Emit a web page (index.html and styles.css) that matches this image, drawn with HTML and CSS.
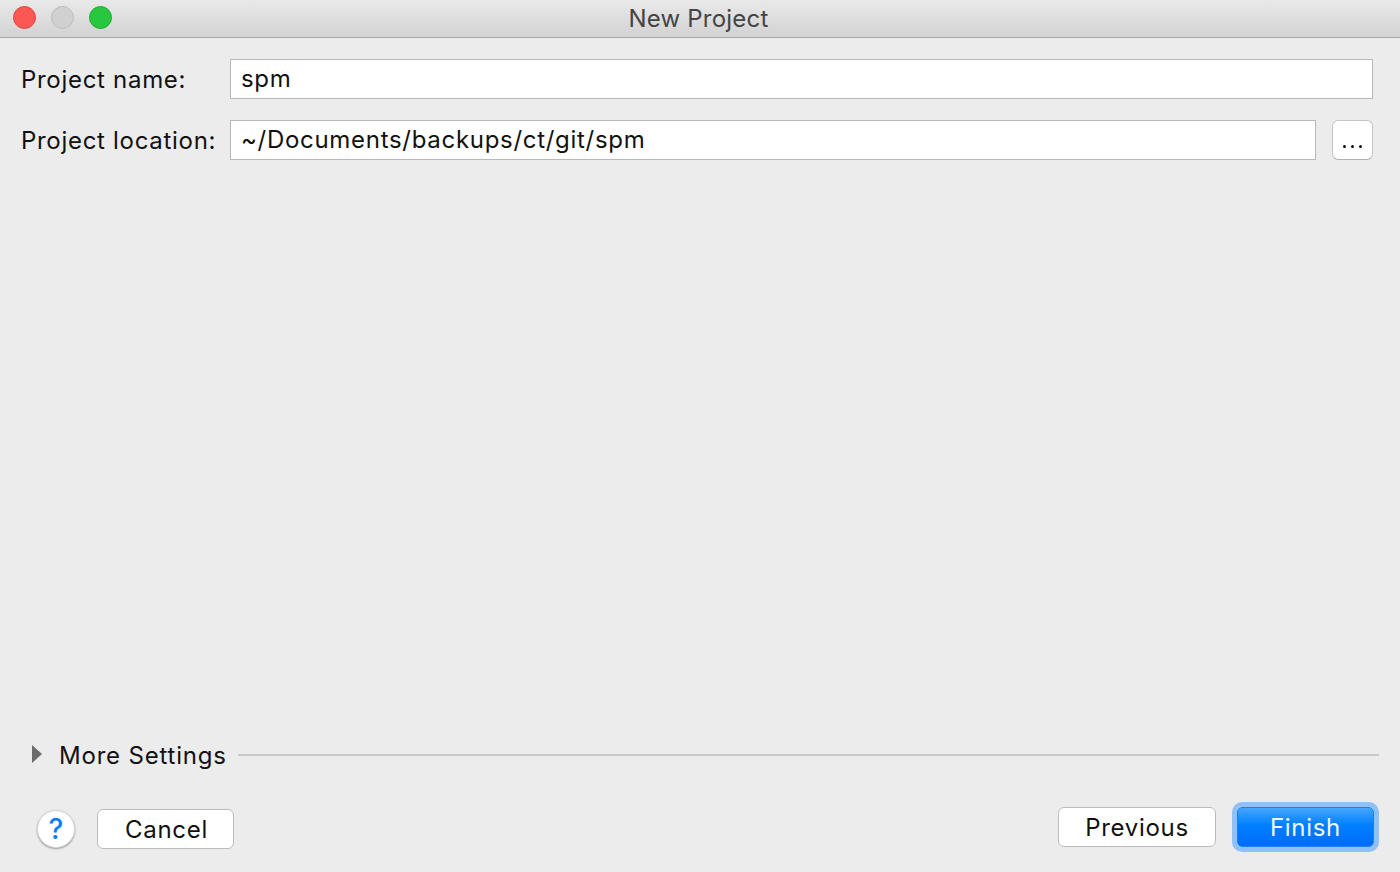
FILE: index.html
```html
<!DOCTYPE html>
<html lang="en">
<head>
    <meta charset="UTF-8">
    <title>New Project</title>
    <link rel="stylesheet" href="styles.css">
</head>
<body>
    <div class="window">
        <div class="titlebar">
            <div class="lights">
                <span class="light light-close"></span>
                <span class="light light-min"></span>
                <span class="light light-max"></span>
            </div>
            <div class="title">New Project</div>
        </div>
        <div class="form">
            <div class="row">
                <label class="label">Project name:</label>
                <div class="field">spm</div>
            </div>
            <div class="row">
                <label class="label">Project location:</label>
                <div class="field">~/Documents/backups/ct/git/spm</div>
                <button class="browse"><span class="dot"></span><span class="dot"></span><span class="dot"></span></button>
            </div>
        </div>
        <div class="more">
            <svg class="arrow" width="10" height="18" viewBox="0 0 10 18"><path d="M0 0 L10 9 L0 18 Z" fill="#6b6b6b"/></svg>
            <span class="more-label">More Settings</span>
            <div class="more-line"></div>
        </div>
        <div class="footer">
            <div class="footer-left">
                <button class="help">?</button>
                <button class="btn btn-cancel">Cancel</button>
            </div>
            <div class="footer-right">
                <button class="btn btn-prev">Previous</button>
                <button class="btn btn-finish">Finish</button>
            </div>
        </div>
    </div>
</body>
</html>
```
FILE: styles.css
```css
html, body {
    margin: 0;
    padding: 0;
    background: #ececec;
}
body {
    font-family: "Inter", "Liberation Sans", sans-serif;
    font-size: 24px;
    letter-spacing: 0.7px;
    color: #111111;
}
.window {
    height: 872px;
    display: flex;
    flex-direction: column;
    overflow: hidden;
}
.titlebar {
    height: 37px;
    border-bottom: 1px solid #a8a8a8;
    background: linear-gradient(#e9e9e9, #d2d2d2);
    display: flex;
    align-items: center;
    justify-content: center;
    position: relative;
}
.lights {
    position: absolute;
    top: 6px;
    left: 13px;
    display: flex;
    gap: 15px;
}
.light {
    width: 23px;
    height: 23px;
    box-sizing: border-box;
    border-radius: 50%;
    border: 1px solid #c8c8c8;
    background: #d2d2d2;
}
.light-close {
    background: #fc5753;
    border-color: #e0443e;
}
.light-min {
    background: #d0d0d0;
    border-color: #bdbdbd;
}
.light-max {
    background: #27c83f;
    border-color: #1dad2b;
}
.title {
    color: #444444;
    font-size: 24px;
    letter-spacing: 0.2px;
    margin-left: -3px;
}
.form {
    flex: 1;
    padding: 21px 27px 0 21px;
    display: flex;
    flex-direction: column;
    gap: 21px;
}
.row {
    display: flex;
    align-items: center;
}
.label {
    width: 209px;
    flex: none;
}
.field {
    flex: 1;
    height: 40px;
    box-sizing: border-box;
    background: #ffffff;
    border: 1px solid #b9b9b9;
    padding-left: 10px;
    line-height: 38px;
}
.browse {
    width: 41px;
    height: 40px;
    box-sizing: border-box;
    margin-left: 16px;
    padding: 0;
    background: #ffffff;
    border: 1px solid #c4c4c4;
    border-bottom-color: #b0b0b0;
    border-radius: 6px;
    display: flex;
    align-items: flex-end;
    justify-content: center;
    gap: 5px;
}
.dot {
    width: 3px;
    height: 3px;
    margin-bottom: 11px;
    border-radius: 50%;
    background: #111111;
}
.more {
    display: flex;
    align-items: center;
    padding: 0 21px 0 32px;
    height: 20px;
    margin-bottom: 37px;
}
.arrow {
    flex: none;
    margin-top: -2px;
}
.more-label {
    margin-left: 17px;
    letter-spacing: 0.8px;
    white-space: nowrap;
}
.more-line {
    flex: 1;
    height: 2px;
    margin-left: 11px;
    background: #c9c9c9;
}
.footer {
    display: flex;
    justify-content: space-between;
    align-items: flex-start;
    padding: 0 21px 20px 37px;
    height: 50px;
}
.footer-left {
    display: flex;
    align-items: center;
    gap: 22px;
    padding-top: 7px;
}
.footer-right {
    display: flex;
    align-items: center;
    gap: 16px;
}
button {
    font-family: inherit;
    font-size: 24px;
    letter-spacing: 0.7px;
    color: #111111;
}
.help {
    width: 38px;
    height: 38px;
    box-sizing: border-box;
    padding: 0;
    border: 1px solid #d4d4d4;
    border-radius: 50%;
    background: #ffffff;
    box-shadow: 0 1px 2px rgba(0, 0, 0, 0.35);
    color: #0a7bff;
    font-weight: 500;
    font-size: 28px;
    letter-spacing: 0;
}
.btn {
    height: 40px;
    box-sizing: border-box;
    padding: 0;
    background: #ffffff;
    border: 1px solid #bcbcbc;
    border-radius: 6px;
}
.btn-cancel {
    width: 137px;
    padding-left: 2px;
}
.btn-prev {
    width: 158px;
}
.btn-finish {
    width: 137px;
    margin: 5px;
    color: #f4f8ff;
    border: 1px solid #1a80f0;
    border-radius: 5px;
    background: linear-gradient(#46a7ff, #007fff 45%, #006cfb);
    box-shadow: 0 0 0 5px #8fc1f8;
}
```
